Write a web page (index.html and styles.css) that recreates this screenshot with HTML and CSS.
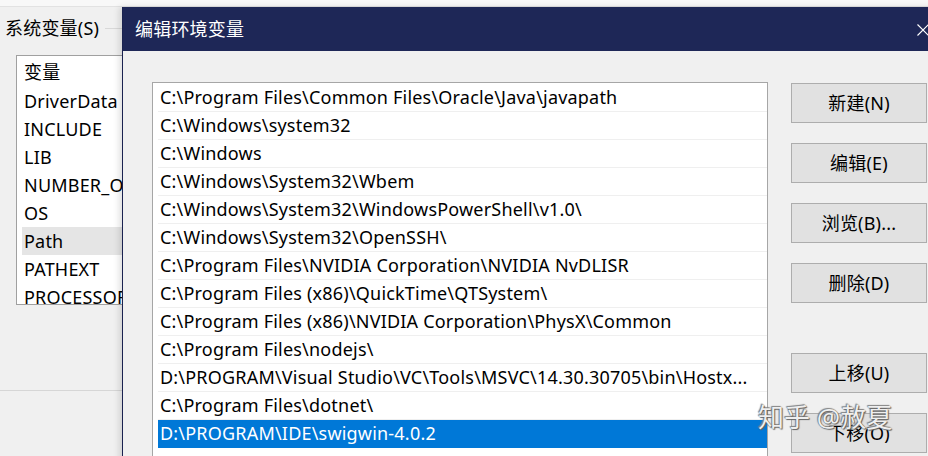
FILE: index.html
```html
<!DOCTYPE html>
<html lang="zh-CN">
<head>
<meta charset="utf-8">
<title>编辑环境变量</title>
<link rel="stylesheet" href="styles.css">
</head>
<body>
<div class="desktop">
  <div class="parent">
    <div class="topstrip"></div>
    <div class="group-label"><span>系统变量(S)</span><i class="group-line"></i></div>
    <div class="sys-list">
      <div class="sys-head">变量</div>
      <div class="sys-row">DriverData</div>
      <div class="sys-row">INCLUDE</div>
      <div class="sys-row">LIB</div>
      <div class="sys-row">NUMBER_OF_PROCESSORS</div>
      <div class="sys-row">OS</div>
      <div class="sys-row sys-hl">Path</div>
      <div class="sys-row">PATHEXT</div>
      <div class="sys-row">PROCESSOR_ARCHITECTURE</div>
    </div>
    <div class="sep-line"></div>
  </div>

  <div class="dialog">
    <div class="titlebar">
      <span class="title">编辑环境变量</span>
      <svg class="close" width="12" height="12" viewBox="0 0 12 12"><path d="M0.5 0.5 L11.5 11.5 M11.5 0.5 L0.5 11.5" stroke="#ffffff" stroke-width="1.1" fill="none"/></svg>
    </div>
    <div class="dlg-body">
      <div class="path-list">
        <div class="path-row">C:\Program Files\Common Files\Oracle\Java\javapath</div>
        <div class="path-row">C:\Windows\system32</div>
        <div class="path-row">C:\Windows</div>
        <div class="path-row">C:\Windows\System32\Wbem</div>
        <div class="path-row">C:\Windows\System32\WindowsPowerShell\v1.0\</div>
        <div class="path-row">C:\Windows\System32\OpenSSH\</div>
        <div class="path-row">C:\Program Files\NVIDIA Corporation\NVIDIA NvDLISR</div>
        <div class="path-row">C:\Program Files (x86)\QuickTime\QTSystem\</div>
        <div class="path-row">C:\Program Files (x86)\NVIDIA Corporation\PhysX\Common</div>
        <div class="path-row">C:\Program Files\nodejs\</div>
        <div class="path-row">D:\PROGRAM\Visual Studio\VC\Tools\MSVC\14.30.30705\bin\Hostx...</div>
        <div class="path-row">C:\Program Files\dotnet\</div>
        <div class="path-row selected">D:\PROGRAM\IDE\swigwin-4.0.2</div>
      </div>
      <div class="buttons">
        <div class="btn">新建(N)</div>
        <div class="btn">编辑(E)</div>
        <div class="btn">浏览(B)...</div>
        <div class="btn">删除(D)</div>
        <div class="btn btn-gap">上移(U)</div>
        <div class="btn">下移(O)</div>
      </div>
    </div>
  </div>

  <div class="watermark">知乎 @赦夏</div>
</div>
</body>
</html>
```

FILE: styles.css
```css
html, body {
  margin: 0;
  padding: 0;
}
body {
  width: 928px;
  height: 456px;
  overflow: hidden;
  background: #f0f0f0;
  font-family: "Noto Sans", "Noto Sans CJK SC", sans-serif;
  font-size: 18px;
  letter-spacing: 0.2px;
  color: #000;
}
.desktop {
  position: relative;
  width: 928px;
  height: 456px;
  overflow: hidden;
}

/* background window */
.parent {
  width: 130px;
}
.topstrip {
  height: 6px;
  width: 928px;
  background: #f8f8f8;
  border-bottom: 1px solid #e2e2e2;
}
.group-label {
  display: flex;
  align-items: center;
  height: 30px;
  margin-top: 6px;
  padding-left: 5px;
  white-space: nowrap;
  line-height: 30px;
}
.group-line {
  flex: 1;
  height: 1px;
  background: #d8d8d8;
  margin-left: 6px;
}
.sys-list {
  margin: 12px 0 0 16px;
  height: 246px;
  border: 1px solid #a0a0a0;
  border-right: none;
  background: #fff;
  overflow: hidden;
  padding: 2px 0 0 5px;
  box-sizing: content-box;
}
.sys-head, .sys-row {
  height: 28px;
  line-height: 28px;
  padding-left: 2px;
  white-space: nowrap;
}
.sys-head {
  height: 29px;
  line-height: 28px;
}
.sys-hl {
  background: #e5e5e5;
}
.sep-line {
  height: 1px;
  background: #d6d6d6;
  margin-top: 85px;
  width: 122px;
}

/* dialog */
.dialog {
  position: absolute;
  left: 122px;
  top: 7px;
  width: 820px;
  height: 460px;
  background: #f0f0f0;
  border-left: 1px solid #1a2250;
  box-shadow: -3px 0 6px rgba(0, 0, 0, 0.12);
}
.titlebar {
  height: 44px;
  background: #1e2757;
  color: #fff;
  display: flex;
  align-items: center;
  justify-content: space-between;
  padding: 0 0 0 12px;
  width: 794px;
}
.title {
  font-size: 18px;
  line-height: 44px;
}
.close {
  display: block;
  margin-top: 1px;
}
.dlg-body {
  display: flex;
  align-items: flex-start;
  padding: 31px 0 0 29px;
}
.path-list {
  width: 609px;
  height: 400px;
  border: 1px solid #a6a6a6;
  background: #fff;
  padding: 1px 0 0 5px;
  overflow: hidden;
}
.path-row {
  height: 27px;
  line-height: 27px;
  border-bottom: 1px solid #efefef;
  padding-left: 2px;
  white-space: nowrap;
  overflow: hidden;
}
.path-row.selected {
  background: #0078d7;
  color: #fff;
  border-bottom-color: #0078d7;
}
.buttons {
  display: flex;
  flex-direction: column;
  gap: 20px;
  margin-left: 23px;
  padding-top: 1px;
}
.btn {
  width: 134px;
  height: 38px;
  line-height: 38px;
  border: 1px solid #adadad;
  background: #e1e1e1;
  text-align: center;
  white-space: nowrap;
}
.btn-gap {
  margin-top: 30px;
}

/* watermark */
.watermark {
  position: absolute;
  left: 758px;
  top: 400px;
  font-size: 26px;
  line-height: 34px;
  letter-spacing: 0;
  color: rgba(255, 255, 255, 0.92);
  white-space: nowrap;
  text-shadow: 0 0 1px #555, 1px 1px 1px #666, -1px -1px 1px #888;
}
```
